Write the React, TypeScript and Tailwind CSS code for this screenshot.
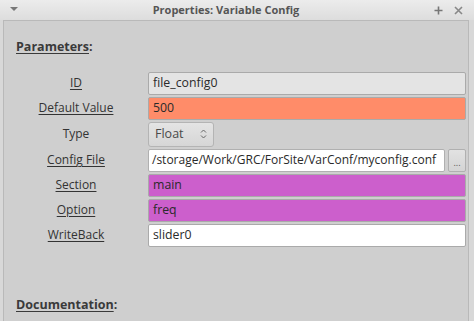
const font = { fontFamily: '"Open Sans", "DejaVu Sans", sans-serif' };

type Row = {
  label: string;
  underline?: boolean;
  value: string;
  kind: 'readonly' | 'orange' | 'purple' | 'white' | 'combo' | 'file';
};

const rows: Row[] = [
  { label: 'ID', underline: true, value: 'file_config0', kind: 'readonly' },
  { label: 'Default Value', underline: true, value: '500', kind: 'orange' },
  { label: 'Type', value: 'Float', kind: 'combo' },
  { label: 'Config File', underline: true, value: '/storage/Work/GRC/ForSite/VarConf/myconfig.conf', kind: 'file' },
  { label: 'Section', underline: true, value: 'main', kind: 'purple' },
  { label: 'Option', underline: true, value: 'freq', kind: 'purple' },
  { label: 'WriteBack', underline: true, value: 'slider0', kind: 'white' },
];

const fieldBg: Record<string, string> = {
  readonly: 'bg-[#e4e4e4]',
  orange: 'bg-[#ff8c69]',
  purple: 'bg-[#cc5fcc]',
  white: 'bg-white',
  file: 'bg-white',
};

function Field({ row }: { row: Row }) {
  if (row.kind === 'combo') {
    return (
      <div className="flex h-[25px] w-[66px] items-center justify-between rounded-[3px] border border-[#b4b4b4] bg-gradient-to-b from-[#e4e4e4] to-[#d6d6d6] pl-[6px] pr-[6px] text-[12.5px] text-[#4a4a4a]">
        <span>{row.value}</span>
        <svg width="7" height="12" viewBox="0 0 7 12">
          <path d="M1 4.5 L3.5 2 L6 4.5" fill="none" stroke="#666" strokeWidth="1" />
          <path d="M1 7.5 L3.5 10 L6 7.5" fill="none" stroke="#666" strokeWidth="1" />
        </svg>
      </div>
    );
  }
  if (row.kind === 'file') {
    return (
      <div className="flex gap-[3px]">
        <div className="flex h-[23px] min-w-0 flex-1 items-center overflow-hidden whitespace-nowrap rounded-[2px] border border-[#b0b0b0] bg-white pl-[3px] text-[12px] text-[#2a2a2a]">
          {row.value}
        </div>
        <div className="flex h-[23px] w-[18px] shrink-0 items-end justify-center rounded-[2px] border border-[#b0b0b0] bg-gradient-to-b from-[#e2e2e2] to-[#d4d4d4] pb-[4px] text-[9px] leading-none text-[#555]">
          ...
        </div>
      </div>
    );
  }
  return (
    <div
      className={`flex h-[23px] items-center rounded-[2px] border border-[#aaaaaa] px-[4px] text-[12.3px] text-[#2a2a2a] ${fieldBg[row.kind]}`}
    >
      {row.value}
    </div>
  );
}

export default function App() {
  return (
    <div className="flex h-[321px] w-[474px] flex-col overflow-hidden bg-[#d8d8d8]" style={font}>
      <div className="flex h-[20px] items-center bg-gradient-to-b from-[#ececec] to-[#dddddd] px-[10px] text-[#555]">
        <svg width="8" height="5" viewBox="0 0 8 5" className="mt-[-1px]">
          <path d="M0 0 H8 L4 4 Z" fill="#777" />
        </svg>
        <div className="flex-1 text-center text-[11px] font-bold">Properties: Variable Config</div>
        <div className="flex items-center gap-[11px] pr-[1px]">
          <svg width="9" height="9" viewBox="0 0 9 9">
            <path d="M4.5 0.5 V8.5 M0.5 4.5 H8.5" stroke="#777" strokeWidth="1.6" />
          </svg>
          <svg width="9" height="9" viewBox="0 0 9 9">
            <path d="M1 1 L8 8 M8 1 L1 8" stroke="#888" strokeWidth="1.6" />
          </svg>
        </div>
      </div>
      <div className="flex flex-1 pr-[5px] pl-[3px]">
        <div className="flex w-[466px] flex-col border-t border-l border-r border-[#b9b9b9] bg-[#cfcfcf] pt-[17px]">
          <div className="pl-[12px] text-[12.5px] font-bold text-[#3a3a3a]">
            <span className="underline underline-offset-2">Parameters</span>:
          </div>
          <div className="mt-[15px] flex flex-col gap-[2px]">
            {rows.map((row) => (
              <div key={row.label} className="flex items-center">
                <div className="w-[144px] text-center text-[12px] text-[#333]">
                  <span className={row.underline ? 'underline underline-offset-2' : ''}>{row.label}</span>
                </div>
                <div className="w-[318px] min-w-0">
                  <Field row={row} />
                </div>
              </div>
            ))}
          </div>
          <div className="mt-auto mb-[6px] pl-[12px] text-[12.5px] font-bold text-[#3a3a3a]">
            <span className="underline underline-offset-2">Documentation</span>:
          </div>
        </div>
      </div>
    </div>
  );
}
